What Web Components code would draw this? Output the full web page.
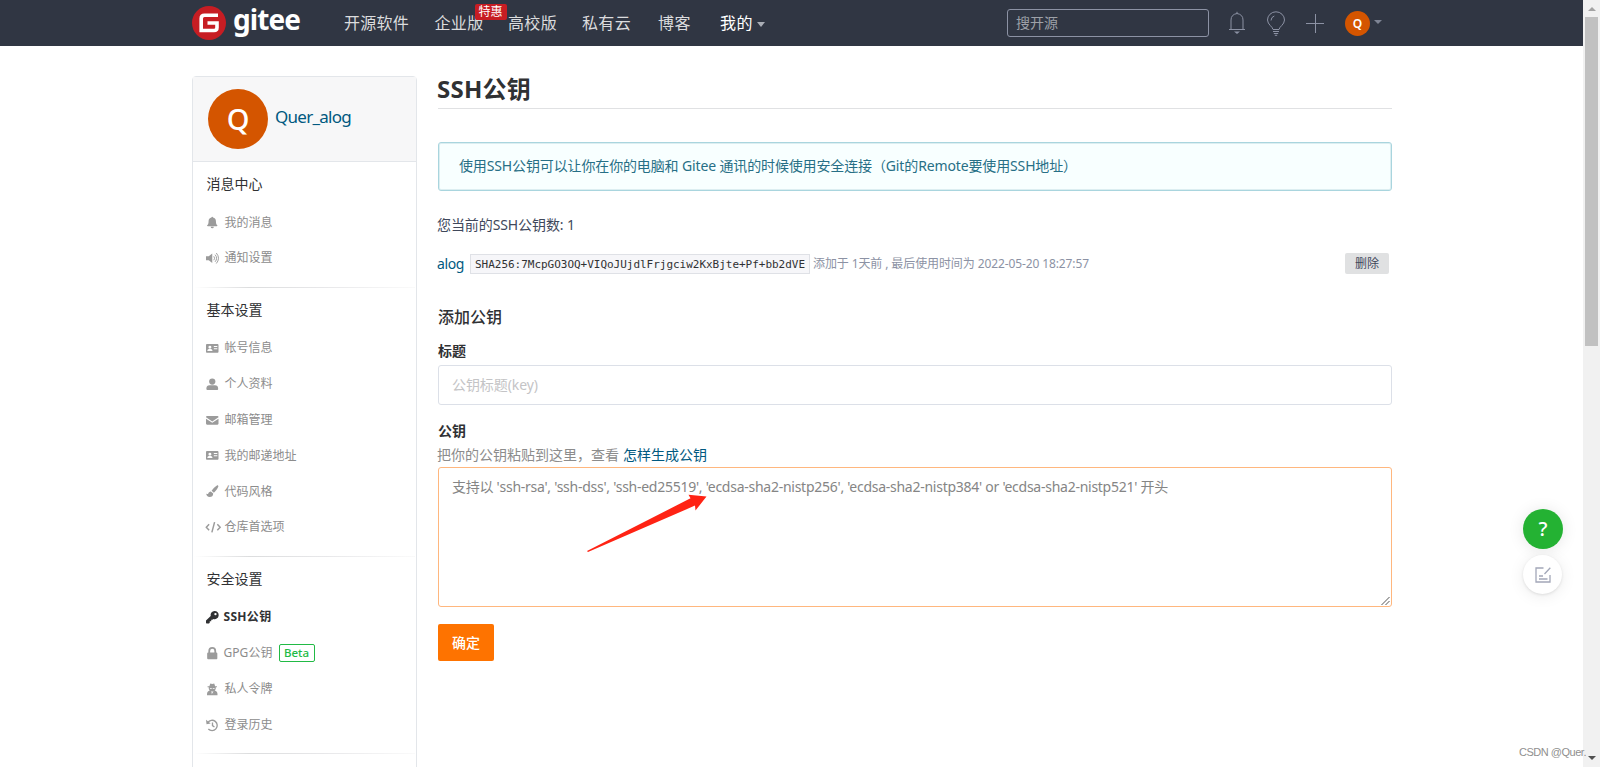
<!DOCTYPE html>
<html lang="zh-CN">
<head>
<meta charset="utf-8">
<title>SSH公钥 - Gitee</title>
<style>
  * {
    box-sizing: border-box;
  }

  body {
    margin: 0;
    height: 767px;
    display: flex;
    overflow: hidden;
    background: #fff;
    color: #40485b;
    font: 14px/20px "Noto Sans", "Noto Sans CJK SC", sans-serif;
  }

  .page {
    flex: 1;
    min-width: 0;
  }

  .columns {
    display: flex;
    align-items: flex-start;
    gap: 21px;
    padding: 30px 0 0 192px;
  }
</style>
</head>
<body>
  <div class="page">
    <site-header></site-header>
    <div class="columns">
      <side-bar></side-bar>
      <ssh-keys></ssh-keys>
    </div>
  </div>
  <scroll-bar></scroll-bar>
  <float-tools></float-tools>
  <red-arrow></red-arrow>
  <water-mark></water-mark>

<script>
// one line of text that always takes the given width
class FitText extends HTMLElement {
  connectedCallback() {
    this.attachShadow({ mode: 'open' });
    const width = Number(this.getAttribute('width'));
    this.shadowRoot.innerHTML = `
      <style>
        :host { display: inline-block; width: ${width}px; white-space: nowrap; }
        span { display: inline-block; margin-left: -1px; }
      </style>
      <span><slot></slot></span>
    `;
    const span = this.shadowRoot.querySelector('span');
    const length = this.textContent.length;
    const extra = (width - span.getBoundingClientRect().width) / length;
    span.style.letterSpacing = extra.toFixed(3) + 'px';
  }
}

const ICONS = {
  bell: '<path d="M8 1c.6 0 1 .4 1 1 2.300.500 3.700 2.300 3.700 4.600 0 3.200.8 4.200 1.600 5 .6.600.2 1.400-.6 1.400H2.300c-.8 0-1.200-.8-.6-1.400.8-.8 1.600-1.800 1.600-5C3.300 4.300 4.700 2.500 7 2c0-.6.4-1 1-1zM6 13.700h4a2 2 0 0 1-4 0z"/>',
  volume: '<path d="M0 5.500h3.500L8 1.800v12.400l-4.500-3.700H0z"/><path d="M10 5.500q2 2.500 0 5M11.600 3.400q3.900 4.600 0 9.200M13.200 1.300q5.600 6.700 0 13.400" fill="none" stroke="currentColor" stroke-width="1.200"/>',
  card: '<path fill-rule="evenodd" d="M1.300 2.500h13.400c.7 0 1.300.6 1.300 1.300v8.600c0 .7-.6 1.300-1.300 1.300H1.300c-.7 0-1.300-.6-1.300-1.300V3.800c0-.7.6-1.300 1.300-1.300zM5 4.700a1.900 1.900 0 1 0 0 3.800 1.900 1.900 0 0 0 0-3.800zM1.700 11.500h6.600c0-1.700-1-2.600-2-2.600H3.700c-1 0-2 .9-2 2.600zM10 5v1.300h4.500V5zm0 3v1.300h4.500V8z"/>',
  user: '<circle cx="8" cy="4.600" r="4"/><path d="M4.500 9.200h7c2.500 0 4 1.600 4 4v.8c0 .8-.5 1.300-1.300 1.300H1.800c-.8 0-1.300-.5-1.300-1.300v-.8c0-2.400 1.500-4 4-4z"/>',
  mail: '<path d="M1.300 2.500h13.400c.8 0 1.300.5 1.300 1.300v.5L8 9.500 0 4.300v-.5c0-.8.5-1.300 1.300-1.300z"/><path d="M0 6l8 5.200L16 6v6.300c0 .8-.5 1.300-1.300 1.300H1.300c-.8 0-1.300-.5-1.300-1.300z"/>',
  brush: '<path d="M14 .6c.9-.6 2.300.5 1.700 1.600-1.700 3.500-3.600 6-5.600 7.600L7.200 7.300C8.600 5 11 2.600 14 .6zM6.200 8.300l3 2.600c.2 3-2 4.500-4.500 4.500C2 15.400.5 13.500.3 10.800c1 .7 1.900 1 2.500.4.6-1.700 1.800-2.800 3.400-2.900z"/>',
  code: '<path d="M4 4.200L.4 8 4 11.800M14.500 4.200L18.100 8l-3.600 3.800M11 1.500L7.500 14.500" fill="none" stroke="currentColor" stroke-width="1.900"/>',
  key: '<path fill-rule="evenodd" d="M10.800 0a5.200 5.200 0 1 1-1.500 10.100L8.200 11.300H6.700v1.900H4.800V15L3.800 16H.7L0 15.300v-3l6-6A5.200 5.200 0 0 1 10.800 0zm1.300 2.400a1.500 1.500 0 1 0 0 3 1.500 1.500 0 0 0 0-3z"/>',
  lock: '<path fill-rule="evenodd" d="M3 7V5a5 5 0 0 1 10 0v2h.2c.8 0 1.300.5 1.300 1.300v6.200c0 .8-.5 1.300-1.300 1.300H2.800c-.8 0-1.300-.5-1.300-1.300V8.300C1.500 7.500 2 7 2.800 7zm2.300 0h5.400V5a2.700 2.700 0 0 0-5.400 0z"/>',
  secret: '<path fill-rule="evenodd" d="M5.500.7L8 1.400l2.500-.7 1.200 3.500H14v1.200h-1.500v1.400c0 1.400-.6 2.200-1.300 2.700 2.200.5 3.500 2 3.500 4.500v1.700H1.300V14c0-2.500 1.300-4 3.500-4.500-.7-.5-1.300-1.300-1.300-2.700V5.400H2V4.200h2.300zM5 6.300v1.200h2.400V6.300zm3.600 0v1.200H11V6.300zM6.300 11l1 1.200-.6 2.600L8 12l1.300 2.800-.6-2.600 1-1.200z"/>',
  history: '<path d="M2.300 4.500A6.600 6.600 0 1 1 3 12.800M8.300 4.500v4l2.500 1.700" fill="none" stroke="currentColor" stroke-width="1.700"/><path d="M0 1l.7 5.700 5.300-.9z"/>'
};

class MenuItem extends HTMLElement {
  connectedCallback() {
    this.attachShadow({ mode: 'open' });
    this.shadowRoot.innerHTML = `
      <style>
        :host {
          display: flex;
          align-items: center;
          height: 35.85px;
          padding-left: 13px;
          font-size: 12px;
          color: #8c8c8c;
        }
        :host([active]) { color: #303133; font-weight: 700; }
        svg {
          width: 12.5px;
          height: 12.5px;
          margin: 0 6px 0 0;
          fill: currentColor;
          color: #9b9b9b;
          overflow: visible;
        }
        :host([active]) svg { color: #303133; }
      </style>
      <svg viewBox="0 0 16 16">${ICONS[this.getAttribute('icon')]}</svg>
      <slot></slot>
    `;
  }
}

class MenuSection extends HTMLElement {
  connectedCallback() {
    this.attachShadow({ mode: 'open' });
    this.shadowRoot.innerHTML = `
      <style>
        :host { display: block; padding: 12px 0 10.4px; }
        h4 {
          margin: 0 0 10.6px 13.5px;
          font-size: 14px;
          line-height: 20px;
          font-weight: 400;
          color: #303133;
        }
        hr {
          height: 1px;
          border: 0;
          margin: 10.400px 1px -10.400px;
          background: linear-gradient(to right, #fff, #dcddde 25%, #e8e8ea 60%, #fafafa);
        }
      </style>
      <h4>${this.getAttribute('heading')}</h4>
      <slot></slot>
      <hr>
    `;
  }
}

class SideBar extends HTMLElement {
  connectedCallback() {
    this.attachShadow({ mode: 'open' });
    this.shadowRoot.innerHTML = `
      <style>
        :host {
          display: block;
          box-sizing: border-box;
          width: 225px;
          height: 720px;
          border: 1px solid #e3e6ea;
          border-radius: 4px 4px 0 0;
        }
        header {
          display: flex;
          align-items: center;
          gap: 8px;
          height: 85px;
          padding-left: 15px;
          border-bottom: 1px solid #e3e6ea;
          background: #f7f7f8;
          font-size: 17px;
          color: #005980;
          box-sizing: border-box;
        }
        .avatar {
          width: 60px;
          height: 60px;
          border-radius: 50%;
          background: #d45500;
          color: #fff;
          font: 500 29px/59px "Noto Sans", sans-serif;
          text-align: center;
        }
        header fit-text { margin-top: -5px; }
        .beta {
          margin-left: 5px;
          width: 36px;
          height: 18px;
          box-sizing: border-box;
          border: 1px solid #21ba45;
          border-radius: 2px;
          font-size: 11.500px;
          line-height: 16px;
          font-weight: 500;
          text-align: center;
          color: #21ba45;
        }
      </style>
      <header>
        <div class="avatar">Q</div>
        <fit-text width="76">Quer_alog</fit-text>
      </header>
      <menu-section heading="消息中心">
        <menu-item icon="bell">我的消息</menu-item>
        <menu-item icon="volume">通知设置</menu-item>
      </menu-section>
      <menu-section heading="基本设置">
        <menu-item icon="card">帐号信息</menu-item>
        <menu-item icon="user">个人资料</menu-item>
        <menu-item icon="mail">邮箱管理</menu-item>
        <menu-item icon="card">我的邮递地址</menu-item>
        <menu-item icon="brush">代码风格</menu-item>
        <menu-item icon="code">仓库首选项</menu-item>
      </menu-section>
      <menu-section heading="安全设置">
        <menu-item icon="key" active><fit-text width="48">SSH公钥</fit-text></menu-item>
        <menu-item icon="lock"><fit-text width="49">GPG公钥</fit-text><span class="beta">Beta</span></menu-item>
        <menu-item icon="secret">私人令牌</menu-item>
        <menu-item icon="history">登录历史</menu-item>
      </menu-section>
    `;
  }
}

class SiteHeader extends HTMLElement {
  connectedCallback() {
    this.attachShadow({ mode: 'open' });
    this.shadowRoot.innerHTML = `
      <style>
        :host {
          display: flex;
          align-items: center;
          box-sizing: border-box;
          height: 46px;
          padding-left: 192px;
          background: #303643;
          color: #dbdcde;
          font-size: 16px;
        }
        .logo { width: 34px; height: 34px; }
        .brand {
          margin: -8px 0 0 8px;
          font: 700 28px/34px "Noto Sans", sans-serif;
          color: #fff;
        }
        nav { display: flex; margin-left: 44px; }
        nav a { display: block; line-height: 24px; margin-right: 25px; }
        nav .promo { position: relative; margin-right: 24.5px; }
        .badge {
          position: absolute;
          left: 39px;
          top: -7px;
          width: 32px;
          height: 16px;
          border-radius: 2px;
          background: #c71d23;
          color: #fff;
          font-size: 12px;
          line-height: 16px;
          text-align: center;
        }
        nav .mine { display: flex; align-items: center; gap: 3px; margin: 0 0 0 4px; color: #fff; }
        .caret {
          border: 4.500px solid transparent;
          border-top: 5px solid #a9adb5;
          border-bottom: 0;
        }
        .mine .caret { margin-top: 3px; }
        .search {
          box-sizing: border-box;
          width: 202px;
          height: 28px;
          margin-left: 242px;
          padding-left: 8px;
          border: 1px solid #8c92a4;
          border-radius: 3px;
          font-size: 14px;
          line-height: 26px;
          color: #9da1a8;
        }
        .tools { display: flex; align-items: center; fill: none; stroke: #8c92a4; }
        .user {
          width: 25px;
          height: 25px;
          margin: 0 4px 0 32px;
          border-radius: 50%;
          background: #d45500;
          color: #fff;
          font-size: 12px;
          line-height: 25px;
          font-weight: 600;
          text-align: center;
        }
        .tools .caret { margin-top: -3px; border-width: 4px 4px 0; border-top-color: #7e8494; }
      </style>
      <svg class="logo" viewBox="0 0 34 34">
        <circle cx="17" cy="17" r="17" fill="#c71d23"/>
        <path d="M26 9.200H12.500Q9.200 9.200 9.200 12.500V24.500H22Q25 24.500 25 21.500V17H15.500" fill="none" stroke="#fff" stroke-width="3.600"/>
      </svg>
      <fit-text class="brand" width="67">gitee</fit-text>
      <nav>
        <a style="margin-right:25.5px"><fit-text width="65">开源软件</fit-text></a>
        <a class="promo"><fit-text width="49">企业版</fit-text><span class="badge">特惠</span></a>
        <a><fit-text width="49">高校版</fit-text></a>
        <a style="margin-right:27px"><fit-text width="49">私有云</fit-text></a>
        <a><fit-text width="33">博客</fit-text></a>
        <a class="mine"><fit-text width="33">我的</fit-text><i class="caret"></i></a>
      </nav>
      <div class="search">搜开源</div>
      <div class="tools">
        <svg width="18" height="24" viewBox="0 0 18 24" style="margin-left:19px">
          <path d="M1 18.500H17M3 18V9Q3 3.500 9 2.500Q15 3.500 15 9V18M9 .8V2.500"/>
          <path d="M6 20.500h6l-3 2.500z" fill="#8c92a4" stroke="none"/>
        </svg>
        <svg width="20" height="25" viewBox="0 0 20 25" style="margin-left:20px">
          <path d="M7 18.500C6.800 15.800 1.500 13.500 1.500 9A8.500 8.200 0 0 1 18.500 9C18.500 13.500 13.200 15.800 13 18.500zM5 9.500Q5.200 6 8.300 5M7 20.500H13M7.800 22.500H12.200M8.800 24.300H11.200"/>
        </svg>
        <svg width="18" height="20" viewBox="0 0 18 20" style="margin-left:20px">
          <path d="M0 10.500H18M9.500 1V20"/>
        </svg>
        <div class="user" style="margin-left:21px">Q</div>
        <i class="caret"></i>
      </div>
    `;
  }
}

class SshKeys extends HTMLElement {
  connectedCallback() {
    this.attachShadow({ mode: 'open' });
    this.shadowRoot.innerHTML = `
      <style>
        * { box-sizing: border-box; }
        :host { display: block; width: 954px; color: #303133; }
        h1 {
          margin: -3px 0 33px;
          height: 36px;
          border-bottom: 1px solid #e0e1e3;
          font-size: 24px;
          line-height: 32px;
          font-weight: 700;
        }
        .notice {
          height: 49px;
          padding-left: 21px;
          border: 1px solid #a9d5de;
          border-radius: 3px;
          box-shadow: inset 0 0 0 1px #dceef1;
          background: #f8ffff;
          color: #276f86;
          line-height: 46px;
        }
        .count { margin: 24px 0 18px; color: #40485b; }
        .key { display: flex; align-items: center; height: 22px; font-size: 12px; }
        .key a { font-size: 14px; color: #005980; }
        code {
          height: 20px;
          margin: 0 4px 0 5px;
          padding-left: 5px;
          width: 340px;
          border: 1px solid #dfe1e6;
          background: #f6f6f9;
          font: 11px/19px "DejaVu Sans Mono", monospace;
        }
        .meta { color: #8c92a4; }
        .delete {
          width: 44px;
          height: 21px;
          margin: 0 3px 2px auto;
          border-radius: 2px;
          background: #e0e1e2;
          color: #40485b;
          line-height: 21px;
          text-align: center;
        }
        h3 { margin: 32px 0 14px; font-size: 16px; line-height: 20px; font-weight: 500; }
        label { display: block; font-weight: 600; }
        .input {
          height: 40px;
          margin: 4px 0 16px;
          padding-left: 14px;
          border: 1px solid #dce0e8;
          border-radius: 3px;
          line-height: 37px;
          color: #c4c4c6;
        }
        .hint { display: flex; gap: 3px; margin-top: 4px; color: #8c8c8c; }
        .hint a { color: #005980; }
        .area {
          display: flex;
          justify-content: space-between;
          height: 140px;
          margin: 2px 0 17px;
          padding: 9px 0 0 14px;
          border: 1px solid #ffb77e;
          border-radius: 3px;
          color: #858585;
        }
        .area svg { align-self: flex-end; }
        .submit {
          width: 56px;
          height: 37px;
          border-radius: 2px;
          background: #fe7300;
          color: #fff;
          line-height: 38px;
          font-weight: 500;
          text-align: center;
        }
      </style>
      <h1><fit-text width="94">SSH公钥</fit-text></h1>
      <div class="notice"><fit-text width="618">使用SSH公钥可以让你在你的电脑和 Gitee 通讯的时候使用安全连接（Git的Remote要使用SSH地址）</fit-text></div>
      <div class="count"><fit-text width="138">您当前的SSH公钥数: 1</fit-text></div>
      <div class="key">
        <a><fit-text width="27">alog</fit-text></a>
        <code><fit-text width="330">SHA256:7McpGO3OQ+VIQoJUjdlFrjgciw2KxBjte+Pf+bb2dVE</fit-text></code>
        <span class="meta"><fit-text width="276">添加于 1天前 , 最后使用时间为 2022-05-20 18:27:57</fit-text></span>
        <span class="delete">删除</span>
      </div>
      <h3>添加公钥</h3>
      <label>标题</label>
      <div class="input"><fit-text width="86">公钥标题(key)</fit-text></div>
      <label>公钥</label>
      <div class="hint"><fit-text width="182">把你的公钥粘贴到这里，查看</fit-text><a>怎样生成公钥</a></div>
      <div class="area">
        <fit-text width="716">支持以 'ssh-rsa', 'ssh-dss', 'ssh-ed25519', 'ecdsa-sha2-nistp256', 'ecdsa-sha2-nistp384' or 'ecdsa-sha2-nistp521' 开头</fit-text>
        <svg width="10" height="10" viewBox="0 0 10 10" stroke="#555"><path d="M.5 9L8.500 1M4.500 9L8.500 5"/></svg>
      </div>
      <div class="submit">确定</div>
    `;
  }
}

class ScrollBar extends HTMLElement {
  connectedCallback() {
    this.attachShadow({ mode: 'open' });
    this.shadowRoot.innerHTML = `
      <style>
        :host {
          display: flex;
          flex-direction: column;
          align-items: center;
          width: 17px;
          height: 767px;
          background: #f1f1f1;
        }
        .up { margin-top: 7px; border: 4px solid transparent; border-top: 0; border-bottom-color: #a3a3a3; }
        .thumb { width: 13px; height: 329px; margin-top: 6px; background: #c1c1c1; }
        .down { margin: auto 0 7px; border: 4px solid transparent; border-bottom: 0; border-top-color: #505050; }
      </style>
      <i class="up"></i>
      <div class="thumb"></div>
      <i class="down"></i>
    `;
  }
}

class FloatTools extends HTMLElement {
  connectedCallback() {
    this.attachShadow({ mode: 'open' });
    this.shadowRoot.innerHTML = `
      <style>
        :host {
          position: absolute;
          left: 1523px;
          top: 509px;
          display: flex;
          flex-direction: column;
          gap: 6px;
        }
        div {
          display: flex;
          align-items: center;
          justify-content: center;
          width: 40px;
          height: 40px;
          border-radius: 50%;
          background: #fff;
          box-shadow: 0 1px 16px rgba(0, 0, 0, .1);
        }
        .help { background: #24b233; color: #fff; font: 500 20px/38px "Noto Sans", sans-serif; }
        .edit { height: 39px; width: 39px; box-shadow: 0 1px 3px rgba(0, 0, 0, .1), 0 2px 16px rgba(0, 0, 0, .08); }
      </style>
      <div class="help">?</div>
      <div class="edit">
        <svg width="16" height="16" viewBox="0 0 16 16" fill="none" stroke="#a2a7b8" stroke-width="1.300">
          <path d="M8.500 1H1V15H15V8M15.300 .7L9.500 7M4 9H8M4 12H12.500"/>
        </svg>
      </div>
    `;
  }
}

class RedArrow extends HTMLElement {
  connectedCallback() {
    this.attachShadow({ mode: 'open' });
    this.shadowRoot.innerHTML = `
      <style>
        :host { position: absolute; left: 586px; top: 493px; display: block; height: 60px; }
      </style>
      <svg width="122" height="60" viewBox="0 0 122 60">
        <path d="M1 58L104.500 5.300 102.500 1.800 120.500 3.500 109.500 17.500 109 12.600 2 59Z" fill="#ff2314"/>
      </svg>
    `;
  }
}

class WaterMark extends HTMLElement {
  connectedCallback() {
    this.attachShadow({ mode: 'open' });
    this.shadowRoot.innerHTML = `
      <style>
        :host {
          position: absolute;
          left: 1520px;
          top: 744px;
          font: 11px/17px "Liberation Sans", sans-serif;
          color: #8f8f8f;
        }
      </style>
      <fit-text width="67">CSDN @Quer.</fit-text>
    `;
  }
}

customElements.define('fit-text', FitText);
customElements.define('menu-item', MenuItem);
customElements.define('menu-section', MenuSection);
customElements.define('side-bar', SideBar);
customElements.define('site-header', SiteHeader);
customElements.define('ssh-keys', SshKeys);
customElements.define('scroll-bar', ScrollBar);
customElements.define('float-tools', FloatTools);
customElements.define('red-arrow', RedArrow);
customElements.define('water-mark', WaterMark);
</script>
</body>
</html>
